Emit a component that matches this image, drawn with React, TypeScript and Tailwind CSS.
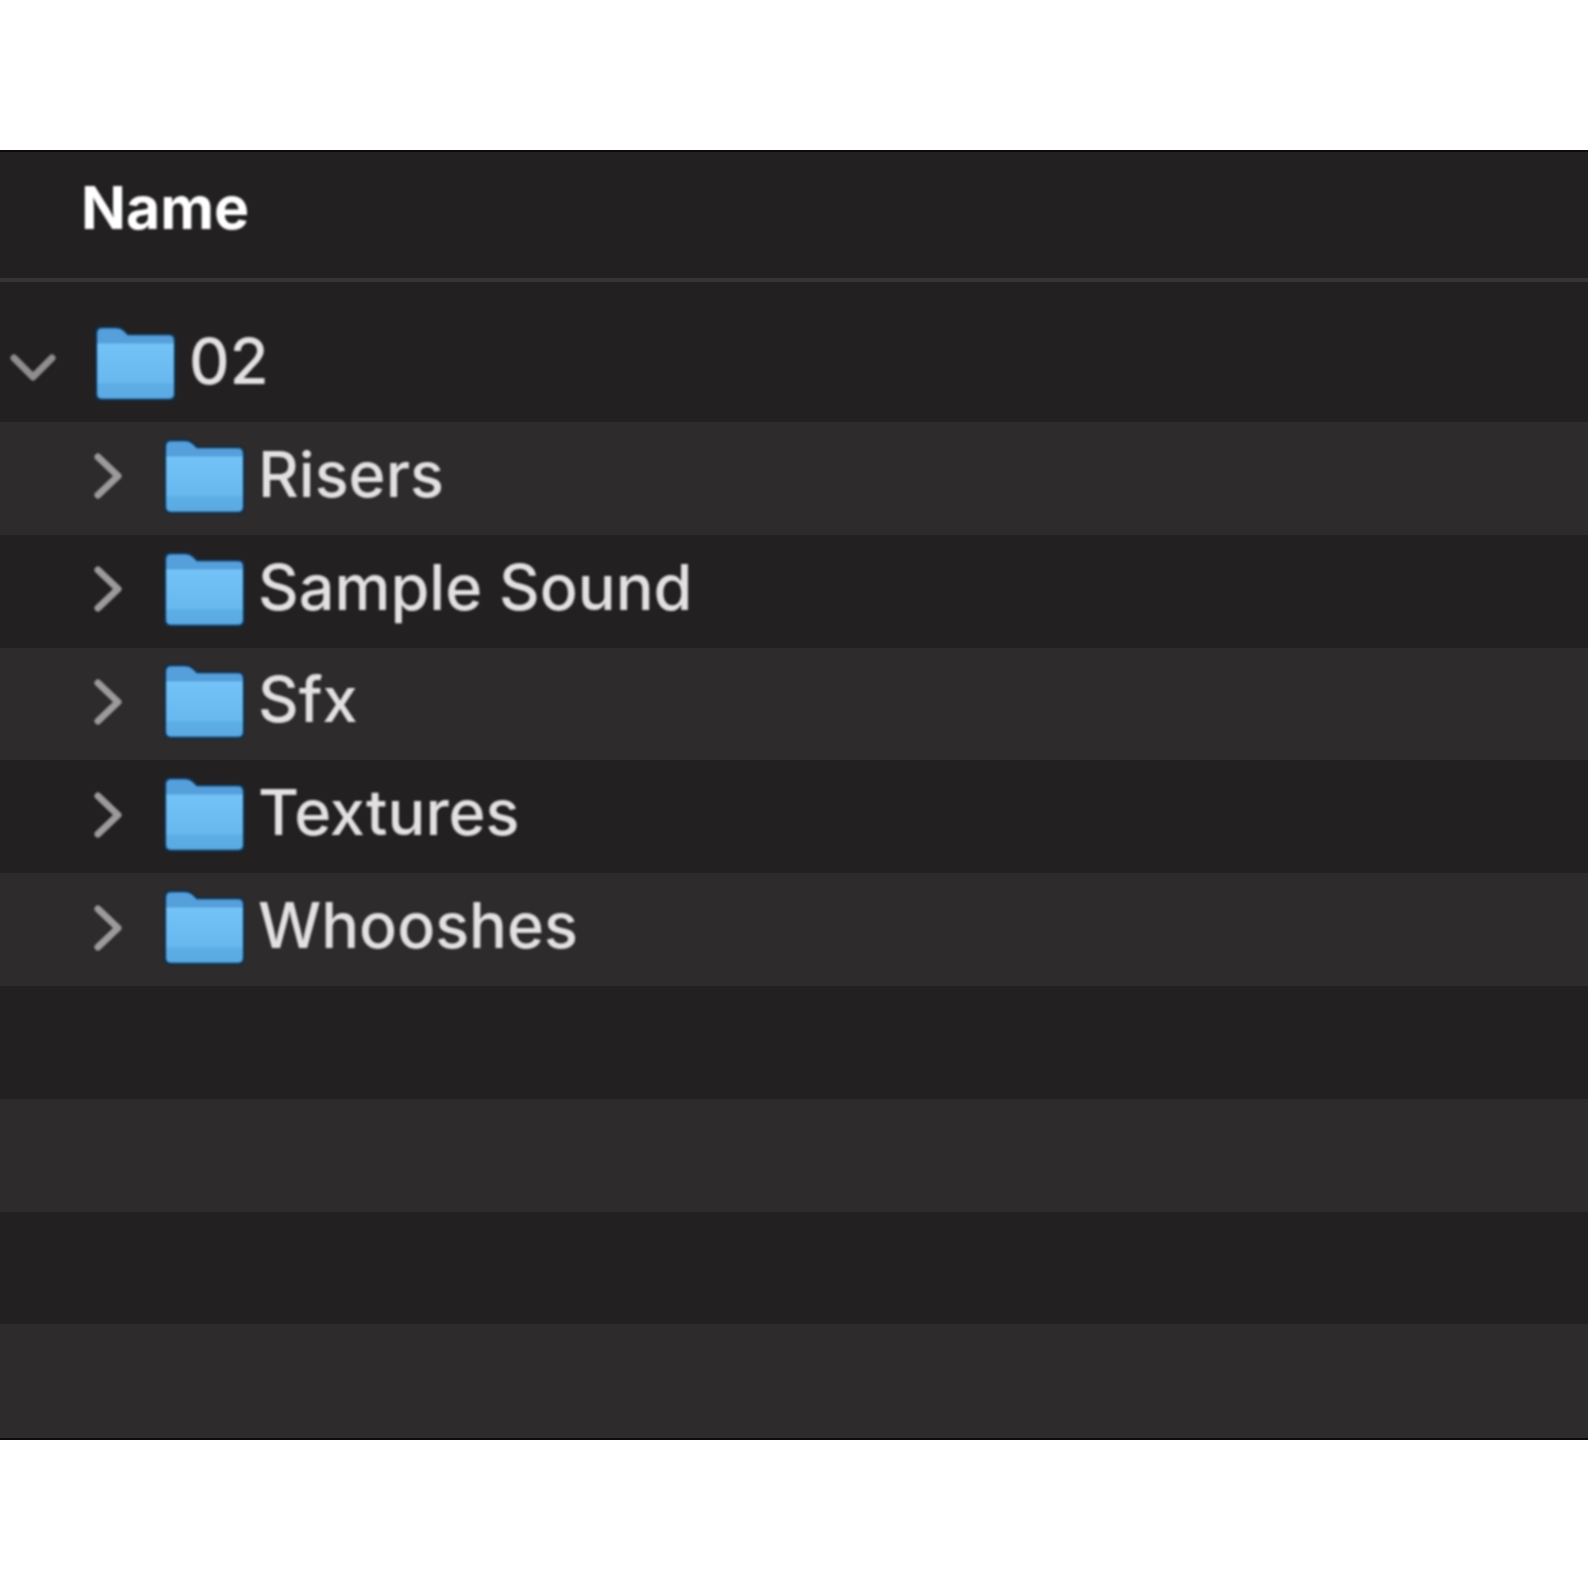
const rows = ['Risers', 'Sample Sound', 'Sfx', 'Textures', 'Whooshes'];

function Folder() {
  return (
    <svg width="83" height="77" viewBox="0 0 81 75" className="shrink-0 blur-[0.8px]">
      <defs>
        <linearGradient id="folderBody" x1="0" y1="0" x2="0" y2="1">
          <stop offset="0" stopColor="#74c3f7" />
          <stop offset="0.7" stopColor="#68b8ef" />
          <stop offset="0.74" stopColor="#5eaee6" />
          <stop offset="1" stopColor="#5aa9e2" />
        </linearGradient>
      </defs>
      <path
        d="M1 7 Q1 1 7 1 H23 Q27 1 30 4 L34 8 H74 Q80 8 80 14 V68 Q80 74 74 74 H7 Q1 74 1 68 Z"
        fill="#12304d"
      />
      <path
        d="M3 8 Q3 3 8 3 H22 Q26 3 29 6 L33 10 H73 Q78 10 78 15 V20 H3 Z"
        fill="#559fdb"
      />
      <path
        d="M3 18 H78 V67 Q78 72 73 72 H8 Q3 72 3 67 Z"
        fill="url(#folderBody)"
      />
    </svg>
  );
}

function Chevron({ open }: { open?: boolean }) {
  if (open) {
    return (
      <svg width="46" height="30" viewBox="0 0 46 30" className="shrink-0 mt-2 blur-[0.8px]">
        <path d="M4 5 L23 24 L42 5" fill="none" stroke="#8f8d8d" strokeWidth="7" strokeLinecap="round" strokeLinejoin="round" />
      </svg>
    );
  }
  return (
    <svg width="30" height="46" viewBox="0 0 30 46" className="shrink-0 blur-[0.8px]">
      <path d="M5 4 L25 23 L5 42" fill="none" stroke="#9c9a9a" strokeWidth="7" strokeLinecap="round" strokeLinejoin="round" />
    </svg>
  );
}

export default function App() {
  return (
    <div className="min-h-[1588px] bg-white pt-[150px] font-['Inter','Liberation_Sans',Arial,sans-serif]">
      <div className="border-y-2 border-[#0d0c0d] bg-[#222021]">
        <div className="flex h-[130px] items-start pt-[26px] pl-[81px] border-b-[4px] border-[#373536]">
          <span className="inline-block text-[59px] font-bold leading-none text-white blur-[0.8px]">Name</span>
        </div>
        <div className="flex h-[140px] items-center pl-[10px] pt-[24px]">
          <Chevron open />
          <div className="ml-[38px] mb-[2px]"><Folder /></div>
          <span className="inline-block ml-[12px] mb-[6px] text-[63px] font-medium leading-none text-[#e2e0e0] blur-[0.8px]">02</span>
        </div>
        {rows.map((name, i) => (
          <div
            key={name}
            className={`flex h-[112.8px] items-center pl-[93px] pb-[4px] ${i % 2 === 0 ? 'bg-[#2d2b2c]' : 'bg-[#222021]'}`}
          >
            <Chevron />
            <div className="ml-[40px]"><Folder /></div>
            <span className="inline-block ml-[12px] mb-[4px] text-[63px] font-medium leading-none text-[#e2e0e0] blur-[0.8px]">{name}</span>
          </div>
        ))}
        <div className="h-[112.8px] bg-[#222021]" />
        <div className="h-[112.8px] bg-[#2d2b2c]" />
        <div className="h-[112.8px] bg-[#222021]" />
        <div className="h-[114px] bg-[#2d2b2c]" />
      </div>
    </div>
  );
}
